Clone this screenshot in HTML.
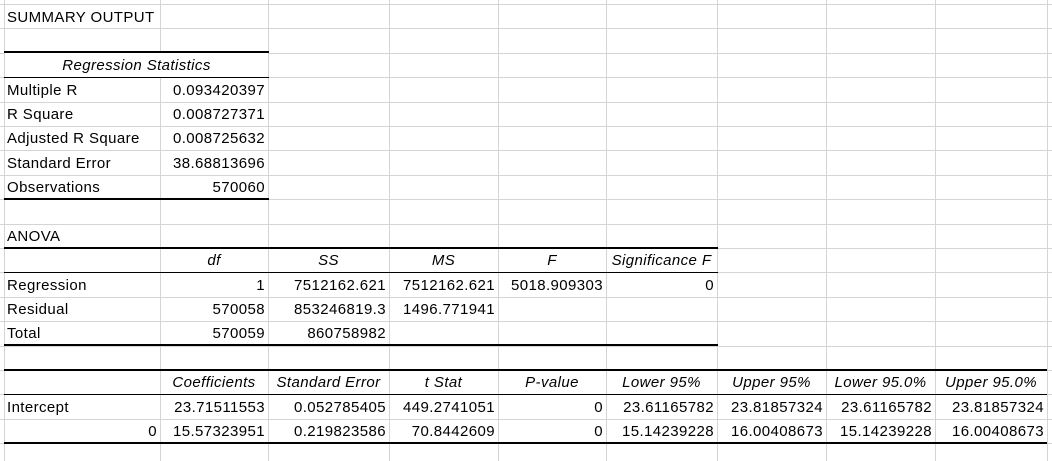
<!DOCTYPE html>
<html><head><meta charset="utf-8"><style>
html,body{margin:0;padding:0;background:#fff;width:1052px;height:461px;overflow:hidden}
#g{position:absolute;left:0;top:0;width:1052px;height:461px;
font-family:"Liberation Sans",Arial,sans-serif;font-size:15px;letter-spacing:0.4px;color:#000}
.c{position:absolute;height:24.4px;line-height:25px;white-space:nowrap;box-sizing:border-box;padding:0 3px;overflow:visible}
.r{text-align:right}.m{text-align:center}.i{font-style:italic}
.vl{position:absolute;top:0;width:1px;height:461px;background:#d4d4d4}
.hl{position:absolute;left:0;width:1052px;height:1px;background:#d4d4d4}
.tk{position:absolute;height:2px;background:#000}
.tn{position:absolute;height:1px;background:#000}
</style></head><body><div id="g">
<div class="vl" style="left:4px"></div><div class="vl" style="left:160px"></div><div class="vl" style="left:268px"></div><div class="vl" style="left:389px"></div><div class="vl" style="left:498px"></div><div class="vl" style="left:606px"></div><div class="vl" style="left:717px"></div><div class="vl" style="left:826px"></div><div class="vl" style="left:935px"></div><div class="vl" style="left:1047px"></div>
<div class="hl" style="top:4px"></div><div class="hl" style="top:28px"></div><div class="hl" style="top:53px"></div><div class="hl" style="top:77px"></div><div class="hl" style="top:102px"></div><div class="hl" style="top:126px"></div><div class="hl" style="top:150px"></div><div class="hl" style="top:175px"></div><div class="hl" style="top:199px"></div><div class="hl" style="top:224px"></div><div class="hl" style="top:248px"></div><div class="hl" style="top:272px"></div><div class="hl" style="top:297px"></div><div class="hl" style="top:321px"></div><div class="hl" style="top:346px"></div><div class="hl" style="top:370px"></div><div class="hl" style="top:394px"></div><div class="hl" style="top:419px"></div><div class="hl" style="top:443px"></div>
<div style="position:absolute;left:5px;width:263px;top:53px;height:24px;background:#fff"></div>
<div class="tk" style="left:4px;width:265px;top:51px"></div>
<div class="tn" style="left:4px;width:265px;top:77px"></div>
<div class="tk" style="left:4px;width:265px;top:198px"></div>
<div class="tk" style="left:4px;width:714px;top:247px"></div>
<div class="tn" style="left:4px;width:714px;top:272px"></div>
<div class="tk" style="left:4px;width:714px;top:344px"></div>
<div class="tk" style="left:4px;width:1043px;top:369px"></div>
<div class="tn" style="left:4px;width:1043px;top:394px"></div>
<div class="tk" style="left:4px;width:1043px;top:442px"></div>

<div class="c" style="left:4px;top:5px">SUMMARY OUTPUT</div>
<div class="c m i" style="left:4px;width:265px;top:53px">Regression Statistics</div>
<div class="c" style="left:4px;top:78px">Multiple R</div><div class="c r" style="left:160px;width:108px;top:78px">0.093420397</div>
<div class="c" style="left:4px;top:102px">R Square</div><div class="c r" style="left:160px;width:108px;top:102px">0.008727371</div>
<div class="c" style="left:4px;top:126px">Adjusted R Square</div><div class="c r" style="left:160px;width:108px;top:126px">0.008725632</div>
<div class="c" style="left:4px;top:151px">Standard Error</div><div class="c r" style="left:160px;width:108px;top:151px">38.68813696</div>
<div class="c" style="left:4px;top:175px">Observations</div><div class="c r" style="left:160px;width:108px;top:175px">570060</div>
<div class="c" style="left:4px;top:224px">ANOVA</div>
<div class="c m i" style="left:160px;width:108px;top:248px">df</div><div class="c m i" style="left:268px;width:121px;top:248px">SS</div><div class="c m i" style="left:389px;width:109px;top:248px">MS</div><div class="c m i" style="left:498px;width:108px;top:248px">F</div><div class="c m i" style="left:606px;width:111px;top:248px">Significance F</div>
<div class="c" style="left:4px;top:273px">Regression</div><div class="c r" style="left:160px;width:108px;top:273px">1</div><div class="c r" style="left:268px;width:121px;top:273px">7512162.621</div><div class="c r" style="left:389px;width:109px;top:273px">7512162.621</div><div class="c r" style="left:498px;width:108px;top:273px">5018.909303</div><div class="c r" style="left:606px;width:111px;top:273px">0</div>
<div class="c" style="left:4px;top:297px">Residual</div><div class="c r" style="left:160px;width:108px;top:297px">570058</div><div class="c r" style="left:268px;width:121px;top:297px">853246819.3</div><div class="c r" style="left:389px;width:109px;top:297px">1496.771941</div>
<div class="c" style="left:4px;top:321px">Total</div><div class="c r" style="left:160px;width:108px;top:321px">570059</div><div class="c r" style="left:268px;width:121px;top:321px">860758982</div>
<div class="c m i" style="left:160px;width:108px;top:370px">Coefficients</div><div class="c m i" style="left:268px;width:121px;top:370px">Standard Error</div><div class="c m i" style="left:389px;width:109px;top:370px">t Stat</div><div class="c m i" style="left:498px;width:108px;top:370px">P-value</div><div class="c m i" style="left:606px;width:111px;top:370px">Lower 95%</div><div class="c m i" style="left:717px;width:109px;top:370px">Upper 95%</div><div class="c m i" style="left:826px;width:109px;top:370px">Lower 95.0%</div><div class="c m i" style="left:935px;width:112px;top:370px">Upper 95.0%</div>
<div class="c" style="left:4px;top:395px">Intercept</div><div class="c r" style="left:160px;width:108px;top:395px">23.71511553</div><div class="c r" style="left:268px;width:121px;top:395px">0.052785405</div><div class="c r" style="left:389px;width:109px;top:395px">449.2741051</div><div class="c r" style="left:498px;width:108px;top:395px">0</div><div class="c r" style="left:606px;width:111px;top:395px">23.61165782</div><div class="c r" style="left:717px;width:109px;top:395px">23.81857324</div><div class="c r" style="left:826px;width:109px;top:395px">23.61165782</div><div class="c r" style="left:935px;width:112px;top:395px">23.81857324</div>
<div class="c r" style="left:4px;width:156px;top:419px">0</div><div class="c r" style="left:160px;width:108px;top:419px">15.57323951</div><div class="c r" style="left:268px;width:121px;top:419px">0.219823586</div><div class="c r" style="left:389px;width:109px;top:419px">70.8442609</div><div class="c r" style="left:498px;width:108px;top:419px">0</div><div class="c r" style="left:606px;width:111px;top:419px">15.14239228</div><div class="c r" style="left:717px;width:109px;top:419px">16.00408673</div><div class="c r" style="left:826px;width:109px;top:419px">15.14239228</div><div class="c r" style="left:935px;width:112px;top:419px">16.00408673</div>
</div></body></html>
